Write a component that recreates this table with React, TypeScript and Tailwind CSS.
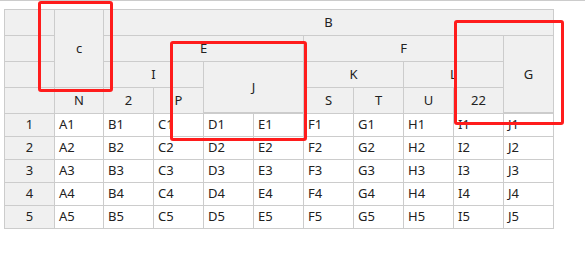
import React from "react"

type HeaderCell = {
  label: string
  cls: string
}

// nested column headers, positioned on the grid
const headers: HeaderCell[] = [
  { label: "", cls: "col-start-1 row-start-1" },
  { label: "c", cls: "col-start-2 row-start-1 row-span-3" },
  { label: "B", cls: "col-start-3 col-span-9 row-start-1" },

  { label: "", cls: "col-start-1 row-start-2" },
  { label: "E", cls: "col-start-3 col-span-4 row-start-2" },
  { label: "F", cls: "col-start-7 col-span-4 row-start-2" },
  { label: "G", cls: "col-start-11 row-start-2 row-span-3 border-b-2" },

  { label: "", cls: "col-start-1 row-start-3" },
  { label: "I", cls: "col-start-3 col-span-2 row-start-3" },
  { label: "J", cls: "col-start-5 col-span-2 row-start-3 row-span-2 border-b-2" },
  { label: "K", cls: "col-start-7 col-span-2 row-start-3" },
  { label: "L", cls: "col-start-9 col-span-2 row-start-3" },

  { label: "", cls: "col-start-1 row-start-4" },
  { label: "N", cls: "col-start-2 row-start-4" },
  { label: "2", cls: "col-start-3 row-start-4" },
  { label: "P", cls: "col-start-4 row-start-4" },
  { label: "S", cls: "col-start-7 row-start-4" },
  { label: "T", cls: "col-start-8 row-start-4" },
  { label: "U", cls: "col-start-9 row-start-4" },
  { label: "22", cls: "col-start-10 row-start-4" },
]

const letters = ["A", "B", "C", "D", "E", "F", "G", "H", "I", "J"]
const rows = [1, 2, 3, 4, 5]

export default function App() {
  return (
    <div className="relative w-[585px] h-[262px] bg-white overflow-hidden text-[13px] text-[#222]" style={{ fontFamily: '"Noto Sans", "Open Sans", Arial, sans-serif' }}>
      <div className="h-px bg-[#cccccc]" />

      <div className="ml-[4px] mt-[8px] grid w-max grid-cols-[50px_49px_repeat(9,50px)] grid-rows-[repeat(4,26px)_repeat(5,23px)] border-l border-t border-[#cccccc]">
        {headers.map((h, i) => (
          <div key={i} className={`${h.cls} flex items-center justify-center bg-[#f0f0f0] border-r border-b border-[#cccccc] leading-none`}>
            {h.label}
          </div>
        ))}

        {rows.map((r) => (
          <React.Fragment key={r}>
            <div className="flex items-center justify-center bg-[#f0f0f0] border-r border-b border-[#cccccc]">{r}</div>
            {letters.map((l) => (
              <div key={l} className="flex items-center pl-[4px] bg-white border-r border-b border-[#cccccc]">
                {l}
                {r}
              </div>
            ))}
          </React.Fragment>
        ))}
      </div>

      {/* highlight boxes */}
      <div className="absolute left-[38px] top-[1px] w-[75px] h-[91px] border-[3px] border-[#ff1c1c] rounded-[3px]" />
      <div className="absolute left-[170px] top-[41px] w-[137px] h-[100px] border-[3px] border-[#ff1c1c] rounded-[3px]" />
      <div className="absolute left-[454px] top-[20px] w-[110px] h-[105px] border-[3px] border-[#ff1c1c] rounded-[3px]" />
    </div>
  )
}
